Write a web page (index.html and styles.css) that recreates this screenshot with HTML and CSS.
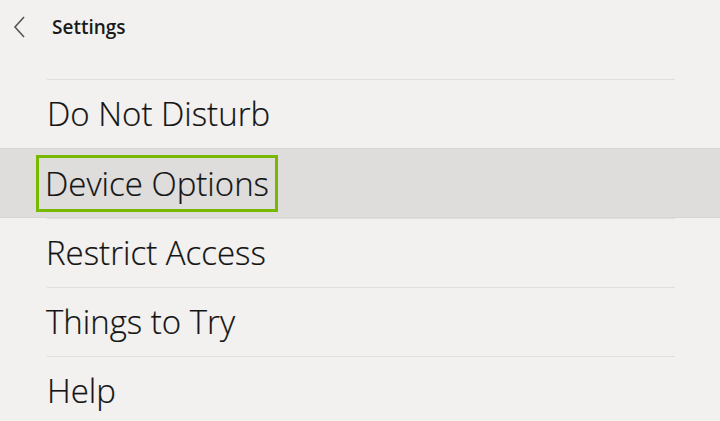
FILE: index.html
```html
<!DOCTYPE html>
<html>
<head>
<meta charset="utf-8">
<link rel="stylesheet" href="styles.css">
</head>
<body>
<div class="screen">
  <header class="topbar">
    <svg class="back" width="14" height="22" viewBox="0 0 14 22"><path d="M11 1 L2 11 L11 21" fill="none" stroke="#555" stroke-width="1.6"/></svg>
    <span class="title">Settings</span>
  </header>
  <ul class="list">
    <li class="row"><div class="inner">Do Not Disturb</div></li>
    <li class="row selected"><div class="inner"><span class="focus">Device Options</span></div></li>
    <li class="row"><div class="inner shift">Restrict Access</div></li>
    <li class="row"><div class="inner shift">Things to Try</div></li>
    <li class="row"><div class="inner">Help</div></li>
  </ul>
</div>
</body>
</html>
```
FILE: styles.css
```css
html, body {
  margin: 0;
  padding: 0;
  background: #f2f1ef;
}
.screen {
  width: 720px;
  height: 421px;
  overflow: hidden;
  background: #f2f1ef;
  font-family: "Open Sans", "DejaVu Sans", sans-serif;
  color: #141414;
}
.topbar {
  height: 79px;
  display: flex;
  align-items: flex-start;
  box-sizing: border-box;
  padding-top: 14px;
}
.back {
  margin-left: 13px;
  margin-top: 2px;
}
.title {
  margin-left: 25px;
  font-size: 19px;
  font-weight: 600;
  line-height: 26px;
  color: #1a1a1a;
}
.list {
  list-style: none;
  margin: 0;
  padding: 0;
}
.row {
  height: 69px;
}
.inner {
  margin: 0 45px 0 47px;
  height: 69px;
  box-sizing: border-box;
  border-top: 1px solid #e0dfdd;
  font-size: 33px;
  font-weight: 300;
  line-height: 68px;
  white-space: nowrap;
  -webkit-text-stroke: 0.2px #141414;
}
.inner.shift {
  text-indent: -1px;
}
.row.selected {
  background: #dedddc;
  border-top: 1px solid #d6d5d4;
  border-bottom: 1px solid #d6d5d4;
  height: 70px;
  box-sizing: border-box;
}
.row.selected .inner {
  border-top: none;
  height: 68px;
  margin-left: 36px;
  display: flex;
  align-items: center;
}
.focus {
  display: inline-block;
  border: 3px solid #78b800;
  padding: 0 6px 0 6px;
  line-height: 51px;
}
```
